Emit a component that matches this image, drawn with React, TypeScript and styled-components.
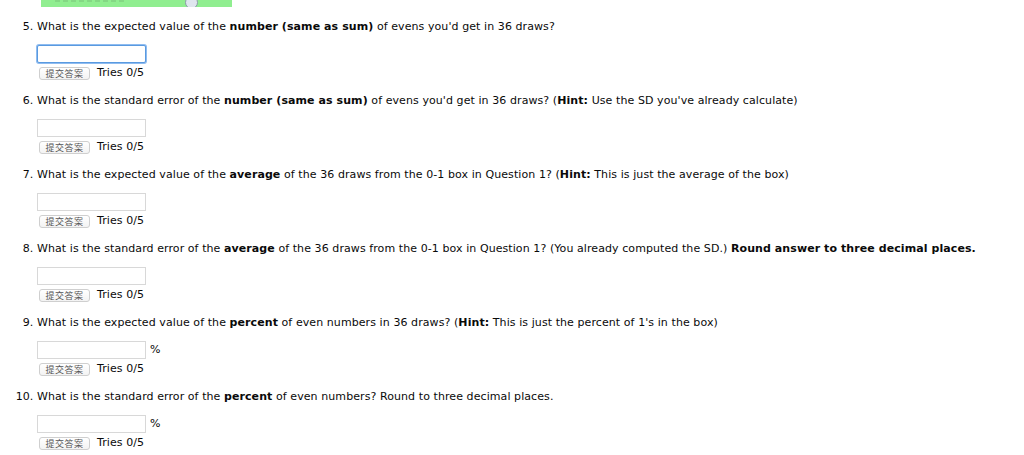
import { createGlobalStyle, styled } from "styled-components";

const GlobalStyle = createGlobalStyle`
  html, body {
    margin: 0;
    padding: 0;
    background: #ffffff;
  }
  body {
    font-family: "DejaVu Sans", Verdana, sans-serif;
    font-size: 11px;
    letter-spacing: 0.08px;
    color: #0a0a0a;
  }
`;

const Page = styled.div`
  width: 1024px;
  height: 455px;
  overflow: hidden;
`;

const TopBar = styled.div`
  margin-left: 41px;
  width: 191px;
  height: 7px;
  background: #90ee90;
  overflow: hidden;
  display: flex;
  align-items: flex-end;
  padding-left: 14px;
  box-sizing: border-box;
`;

const FadedMark = styled.span`
  width: 70px;
  height: 2px;
  margin-bottom: 5px;
  background: repeating-linear-gradient(90deg, #84d884 0 5px, transparent 5px 8px);
  flex: none;
`;

const Knob = styled.span`
  width: 11px;
  height: 11px;
  margin-bottom: -2px;
  margin-left: 60px;
  border-radius: 50%;
  border: 1px solid #8a9aa8;
  background: #dfe6ee;
  flex: none;
`;

const List = styled.ol`
  margin: 13px 0 0;
  padding-left: 37px;
`;

const Item = styled.li`
  margin-bottom: 13px;
  line-height: 14px;
`;

const Question = styled.div`
  line-height: 14px;
`;

const AnswerLine = styled.div`
  margin-top: 11px;
  display: flex;
  align-items: center;
  gap: 4px;
  height: 18px;
`;

const AnswerInput = styled.input<{ $focused?: boolean }>`
  box-sizing: border-box;
  width: 109px;
  height: 18px;
  margin: 0;
  padding: 0 3px;
  font-family: "DejaVu Sans", Verdana, sans-serif;
  font-size: 11px;
  border: 1px solid ${(p) => (p.$focused ? "#5a9ae0" : "#d8d8d8")};
  border-radius: ${(p) => (p.$focused ? "2px" : "0")};
  box-shadow: ${(p) => (p.$focused ? "0 0 0 1px #8fbcf0" : "none")};
  outline: none;
  background: #fff;
`;

const Unit = styled.span`
  font-size: 11px;
`;

const SubmitRow = styled.div`
  margin-top: 2px;
  height: 16px;
  display: flex;
  align-items: center;
  gap: 7px;
  padding-left: 2px;
`;

const SubmitButton = styled.button`
  box-sizing: border-box;
  height: 13px;
  width: 51px;
  padding: 0;
  margin: 0;
  border: 1px solid #cfcfcf;
  border-radius: 3px;
  background: linear-gradient(#ffffff, #f3f3f3);
  font-family: "Noto Sans CJK SC", sans-serif;
  font-size: 9px;
  line-height: 11px;
  color: #555;
  letter-spacing: 0.5px;
`;

const Tries = styled.span`
  font-size: 11px;
`;

type Q = {
  n: number;
  content: React.ReactNode;
  unit?: string;
  focused?: boolean;
};

const questions: Q[] = [
  {
    n: 5,
    focused: true,
    content: (
      <>
        What is the expected value of the <b>number (same as sum)</b> of evens you'd get in 36 draws?
      </>
    ),
  },
  {
    n: 6,
    content: (
      <>
        What is the standard error of the <b>number (same as sum)</b> of evens you'd get in 36 draws? (
        <b>Hint:</b> Use the SD you've already calculate)
      </>
    ),
  },
  {
    n: 7,
    content: (
      <>
        What is the expected value of the <b>average</b> of the 36 draws from the 0-1 box in Question 1? (
        <b>Hint:</b> This is just the average of the box)
      </>
    ),
  },
  {
    n: 8,
    content: (
      <>
        What is the standard error of the <b>average</b> of the 36 draws from the 0-1 box in Question 1? (You
        already computed the SD.) <b>Round answer to three decimal places.</b>
      </>
    ),
  },
  {
    n: 9,
    unit: "%",
    content: (
      <>
        What is the expected value of the <b>percent</b> of even numbers in 36 draws? (<b>Hint:</b> This is
        just the percent of 1's in the box)
      </>
    ),
  },
  {
    n: 10,
    unit: "%",
    content: (
      <>
        What is the standard error of the <b>percent</b> of even numbers? Round to three decimal places.
      </>
    ),
  },
];

export default function App() {
  return (
    <Page>
      <GlobalStyle />
      <TopBar>
        <FadedMark />
        <Knob />
      </TopBar>
      <List start={5}>
        {questions.map((q) => (
          <Item key={q.n} value={q.n}>
            <Question>{q.content}</Question>
            <AnswerLine>
              <AnswerInput type="text" $focused={q.focused} autoFocus={q.focused} />
              {q.unit && <Unit>{q.unit}</Unit>}
            </AnswerLine>
            <SubmitRow>
              <SubmitButton type="button">提交答案</SubmitButton>
              <Tries>Tries 0/5</Tries>
            </SubmitRow>
          </Item>
        ))}
      </List>
    </Page>
  );
}
